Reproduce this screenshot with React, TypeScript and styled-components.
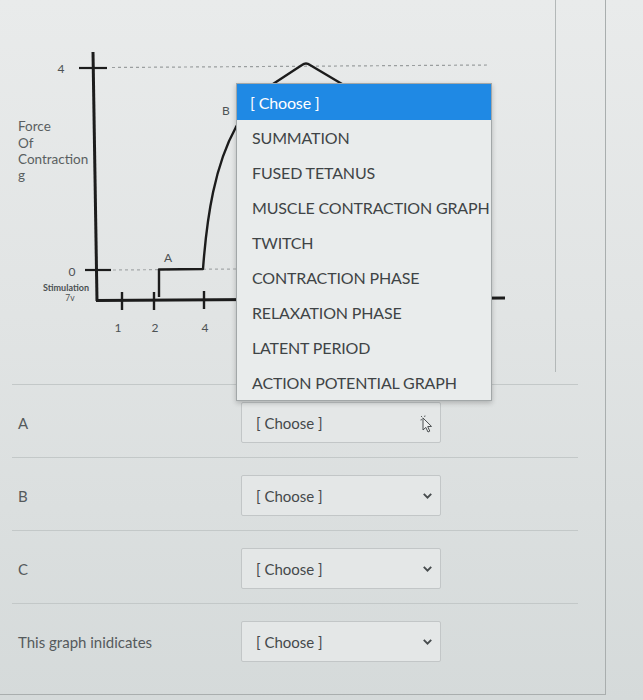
import React from "react";
import styled, { createGlobalStyle } from "styled-components";

const GlobalStyle = createGlobalStyle`
  html, body {
    margin: 0;
    padding: 0;
  }
  body {
    width: 643px;
    height: 700px;
    overflow: hidden;
    font-family: Lato, "Open Sans", "Liberation Sans", sans-serif;
    background: linear-gradient(180deg, #e9ebeb 0%, #e1e4e4 45%, #d5dada 100%);
  }
`;

const Page = styled.div`
  width: 643px;
  height: 700px;
`;

const Card = styled.div`
  position: relative;
  width: 606px;
  height: 695px;
  border-right: 1px solid #a9aeae;
  border-bottom: 1px solid #a9aeae;
  box-sizing: border-box;
`;

const GraphArea = styled.div`
  width: 556px;
  height: 372px;
  border-right: 1px solid #b3b8b8;
  box-sizing: border-box;
`;

const GraphSvg = styled.svg`
  display: block;
`;

const Menu = styled.ul`
  position: absolute;
  left: 236px;
  top: 83px;
  width: 256px;
  margin: 0;
  padding: 0;
  list-style: none;
  background: #e9ecec;
  border: 1px solid #a2a7a8;
  box-shadow: 0 2px 5px rgba(0, 0, 0, 0.22);
  box-sizing: border-box;
`;

const MenuItem = styled.li<{ $active?: boolean }>`
  height: ${(p) => (p.$active ? 36 : 35)}px;
  display: flex;
  align-items: center;
  padding-left: ${(p) => (p.$active ? 13 : 15)}px;
  font-size: 16px;
  color: ${(p) => (p.$active ? "#ffffff" : "#3f4446")};
  background: ${(p) => (p.$active ? "#1f89e4" : "transparent")};
  white-space: nowrap;
  letter-spacing: -0.15px;
`;

const Rows = styled.div`
  margin-top: 12px;
  margin-left: 12px;
  width: 566px;
`;

const Row = styled.div`
  display: grid;
  grid-template-columns: 229px 200px;
  align-items: start;
  height: 73px;
  padding-top: 17px;
  box-sizing: border-box;
  border-top: 1px solid #c3c8c8;
`;

const RowLabel = styled.div`
  padding-left: 6px;
  height: 41px;
  display: flex;
  align-items: center;
  font-size: 15px;
  color: #555a5c;
`;

const Select = styled.div`
  position: relative;
  height: 41px;
  display: flex;
  align-items: center;
  justify-content: space-between;
  padding: 0 7px 0 14px;
  border: 1px solid #c2c6c7;
  border-radius: 2px;
  background: #e4e7e7;
  box-sizing: border-box;
  font-size: 15px;
  color: #45494b;
`;

const Cursor = styled.svg`
  position: absolute;
  right: 6px;
  top: 12px;
`;

const options = [
  "SUMMATION",
  "FUSED TETANUS",
  "MUSCLE CONTRACTION GRAPH",
  "TWITCH",
  "CONTRACTION PHASE",
  "RELAXATION PHASE",
  "LATENT PERIOD",
  "ACTION POTENTIAL GRAPH",
];

const Chevron = () => (
  <svg width="11" height="8" viewBox="0 0 11 8">
    <path d="M1.8 1.8 L5.5 5.6 L9.2 1.8" fill="none" stroke="#474c4e" strokeWidth="1.9" />
  </svg>
);

const ink = "#1c1c1c";
const labelFont = "Lato, 'Liberation Sans', sans-serif";

const Graph = () => (
  <GraphSvg width="555" height="372" viewBox="0 0 555 372">
    {/* y-axis */}
    <path d="M93 52 L97 301" stroke={ink} strokeWidth="3" fill="none" />
    {/* x-axis */}
    <path d="M96 300.5 L505 298" stroke={ink} strokeWidth="3" fill="none" />
    {/* y ticks */}
    <path d="M79 68 L107 68" stroke={ink} strokeWidth="2.2" />
    <path d="M85 270 L111 270" stroke={ink} strokeWidth="2.2" />
    {/* reference dotted lines */}
    <path d="M112 67.5 L490 65" stroke="#9a9e9f" strokeWidth="1.2" strokeDasharray="3 3" />
    <path d="M113 270 L236 269" stroke="#a4a8a9" strokeWidth="1.2" strokeDasharray="3 3" />
    {/* x ticks */}
    <path d="M122 292 L122 310" stroke={ink} strokeWidth="2.4" />
    <path d="M154 292 L154 310" stroke={ink} strokeWidth="2.4" />
    <path d="M204 291 L204 309" stroke={ink} strokeWidth="2.4" />
    {/* stimulus step and contraction curve */}
    <path
      d="M159 297 L159 269.5 L203 269 C207 215 215 165 236 127 C250 105 262 92 273 84 L302 65 Q306 62 310 65 L342 84"
      stroke={ink}
      strokeWidth="2.4"
      fill="none"
      strokeLinejoin="round"
    />
    {/* labels */}
    <g fontFamily={labelFont} fill="#5a5f61" fontSize="13.5">
      <text x="18" y="131">Force</text>
      <text x="18" y="148">Of</text>
      <text x="18" y="164">Contraction</text>
      <text x="18" y="180">g</text>
    </g>
    <g fontFamily={labelFont} fill="#4d5254" fontSize="12" textAnchor="middle">
      <text x="61" y="73">4</text>
      <text x="72" y="276">0</text>
      <text x="118" y="332">1</text>
      <text x="155" y="332">2</text>
      <text x="205" y="332">4</text>
      <text x="168" y="262">A</text>
      <text x="226" y="115">B</text>
    </g>
    <g fontFamily={labelFont} fill="#4b5052" fontWeight="700" textAnchor="middle">
      <text x="66" y="291" fontSize="9">Stimulation</text>
      <text x="70" y="301" fontSize="8.5" fontWeight="400">7v</text>
    </g>
  </GraphSvg>
);

const rows = ["A", "B", "C", "This graph inidicates"];

export default function App() {
  return (
    <Page>
      <GlobalStyle />
      <Card>
        <GraphArea>
          <Graph />
        </GraphArea>
        <Rows>
          {rows.map((label, i) => (
            <Row key={label}>
              <RowLabel>{label}</RowLabel>
              <Select>
                <span>[ Choose ]</span>
                {i === 0 ? (
                  <Cursor width="14" height="18" viewBox="0 0 14 18">
                    <path
                      d="M3 3 L3 15 L5.8 12.4 L8 17 L9.8 16.1 L7.7 11.6 L11.5 11.4 Z"
                      fill="#eef0f0"
                      stroke="#4a4e50"
                      strokeWidth="1"
                      strokeLinejoin="round"
                    />
                    <path d="M1 1 L2.3 2.3 M5 0.5 L4.6 2 M0.5 5 L2 4.6" stroke="#4a4e50" strokeWidth="0.9" />
                  </Cursor>
                ) : (
                  <Chevron />
                )}
              </Select>
            </Row>
          ))}
        </Rows>
        <Menu>
          <MenuItem $active>[ Choose ]</MenuItem>
          {options.map((o) => (
            <MenuItem key={o}>{o}</MenuItem>
          ))}
        </Menu>
      </Card>
    </Page>
  );
}
